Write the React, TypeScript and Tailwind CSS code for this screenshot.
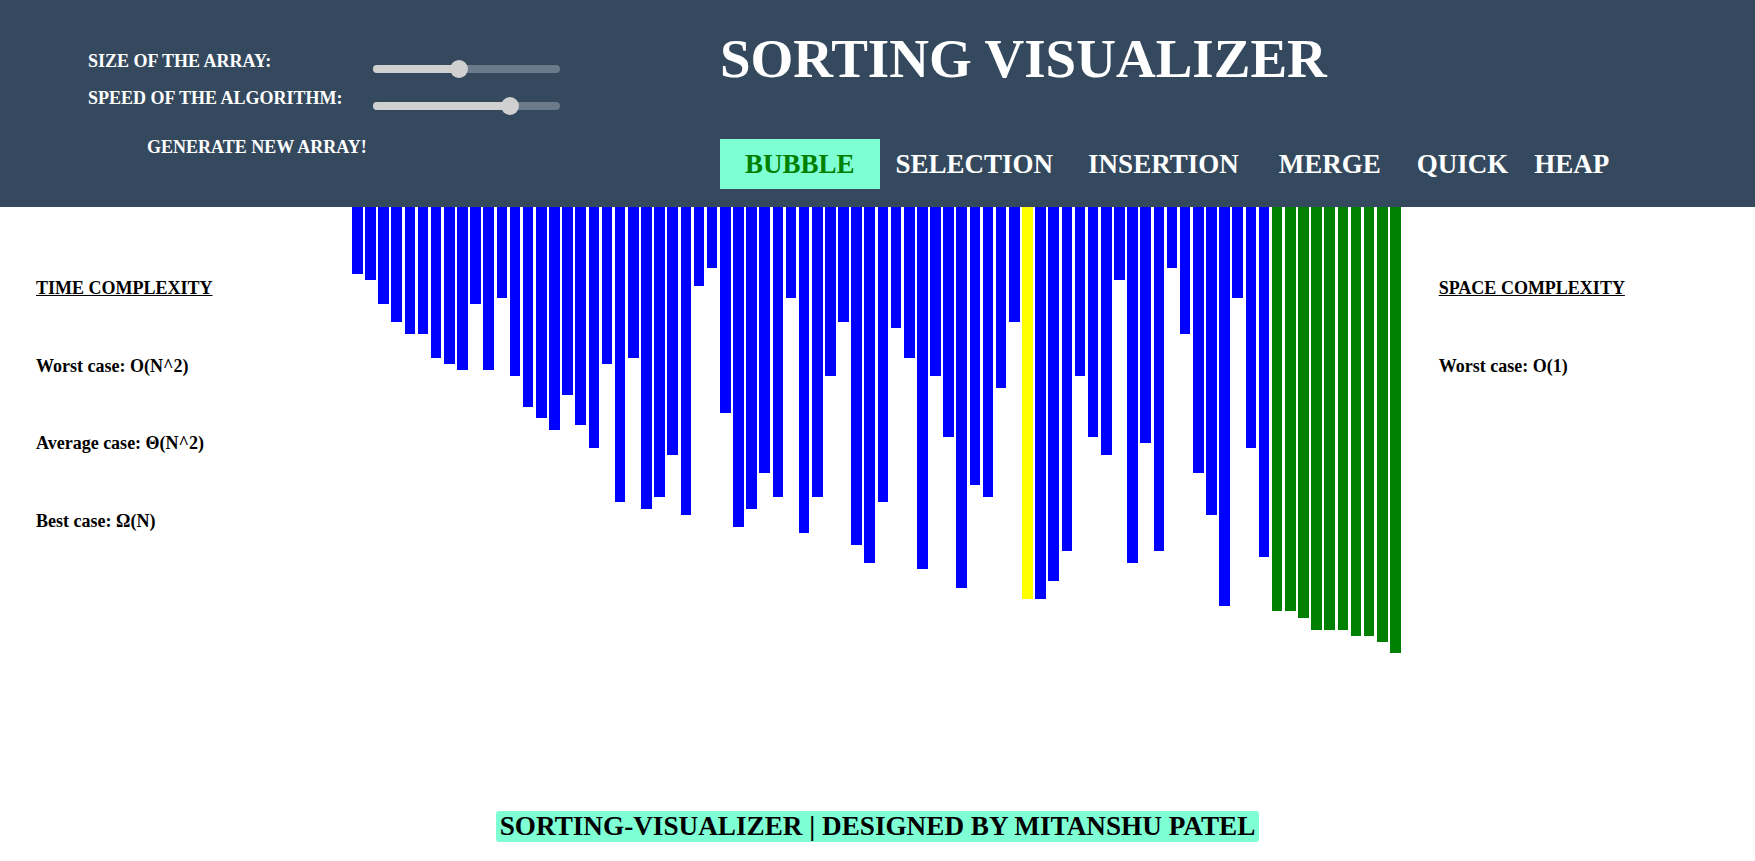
import React from 'react';

// bottom edge (page y) of every bar, left to right
const barBottoms = [
  274, 280, 304, 322, 334, 334, 358, 364, 370, 304,
  370, 298, 376, 407, 418, 430, 395, 425, 448, 364,
  502, 358, 509, 497, 455, 515, 286, 268, 413, 527,
  509, 473, 497, 298, 533, 497, 376, 322, 545, 563,
  502, 328, 358, 569, 376, 437, 588, 485, 497, 388,
  322, 599, 599, 581, 551, 376, 437, 455, 280, 563,
  443, 551, 268, 334, 473, 515, 606, 298, 448, 557,
  611, 611, 618, 630, 630, 630, 636, 636, 642, 653,
];

const HEADER_HEIGHT = 207;

const barColor = (i: number) => {
  if (i === 51) return 'bg-[#ffff00]';
  if (i >= 70) return 'bg-[#008000]';
  return 'bg-[#0000ff]';
};

const Slider = ({ thumb }: { thumb: number }) => {
  return (
    <div className="relative mt-[15px] h-[8px] w-[187px] rounded-full bg-[#6b7b8c]">
      <div className="h-full rounded-full bg-[#d0d0d0]" style={{ width: thumb }} />
      <div
        className="absolute top-[-5px] h-[18px] w-[18px] rounded-full bg-[#d0d0d0]"
        style={{ left: thumb - 9 }}
      />
    </div>
  );
};

export default function App() {
  return (
    <div className="min-h-screen bg-white font-['Liberation_Serif',serif] font-bold">
      {/* Header */}
      <header className="flex h-[207px] bg-[#34495e] text-white">
        <div className="w-[720px] shrink-0 pl-[88px] pt-[50px] text-[18px] leading-[22px]">
          <div className="flex h-[37px]">
            <span className="w-[285px] shrink-0">SIZE OF THE ARRAY:</span>
            <Slider thumb={86} />
          </div>
          <div className="flex h-[37px]">
            <span className="w-[285px] shrink-0">SPEED OF THE ALGORITHM:</span>
            <Slider thumb={137} />
          </div>
          <button className="ml-[59px] mt-[12px] cursor-pointer">GENERATE NEW ARRAY!</button>
        </div>

        <div className="pt-[31px]">
          <h1 className="text-[55px] leading-[55px]">SORTING VISUALIZER</h1>
          <nav className="mt-[53px] flex h-[50px] items-center text-[27px] leading-none">
            <button className="flex h-[50px] items-center bg-[#7fffd4] px-[25px] text-[#008000]">BUBBLE</button>
            <button className="ml-[16px]">SELECTION</button>
            <button className="ml-[35px]">INSERTION</button>
            <button className="ml-[40px]">MERGE</button>
            <button className="ml-[36px]">QUICK</button>
            <button className="ml-[26px]">HEAP</button>
          </nav>
        </div>
      </header>

      {/* Body */}
      <main className="flex h-[604px] text-black">
        <div className="flex w-[352px] shrink-0 flex-col gap-[55.5px] pl-[36px] pt-[70px] text-[18px] leading-[22px]">
          <span className="underline">TIME COMPLEXITY</span>
          <span>Worst case: O(N^2)</span>
          <span>Average case: Θ(N^2)</span>
          <span>Best case: Ω(N)</span>
        </div>

        <div className="flex items-start gap-[2.55px]">
          {barBottoms.map((bottom, i) => (
            <div
              key={i}
              className={`w-[10.6px] shrink-0 ${barColor(i)}`}
              style={{ height: bottom - HEADER_HEIGHT }}
            />
          ))}
        </div>

        <div className="ml-[38px] flex flex-col gap-[55.5px] pt-[70px] text-[18px] leading-[22px]">
          <span className="underline">SPACE COMPLEXITY</span>
          <span>Worst case: O(1)</span>
        </div>
      </main>

      {/* Footer */}
      <footer className="mx-auto w-fit rounded-[3px] bg-[#7fffd4] px-[4px] text-[27.2px] leading-[31px] text-black">
        SORTING-VISUALIZER | DESIGNED BY MITANSHU PATEL
      </footer>
    </div>
  );
}
